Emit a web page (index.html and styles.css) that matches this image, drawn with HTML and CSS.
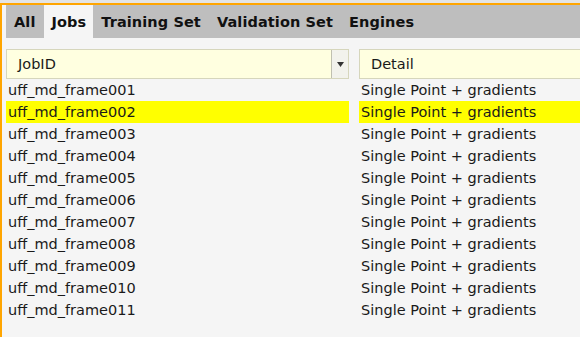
FILE: index.html
```html
<!DOCTYPE html>
<html lang="en">
<head>
	<meta charset="UTF-8">
	<title>Jobs</title>
	<link rel="stylesheet" href="styles.css">
</head>
<body>
	<div class="topline"></div>
	<div class="panel">
		<div class="tabs">
			<a href="javascript:;" class="tab">All</a>
			<a href="javascript:;" class="tab active">Jobs</a>
			<a href="javascript:;" class="tab">Training Set</a>
			<a href="javascript:;" class="tab">Validation Set</a>
			<a href="javascript:;" class="tab">Engines</a>
		</div>
		<div class="table">
			<div class="head combo">
				<span>JobID</span>
				<span class="arrow"><svg width="7" height="5" viewBox="0 0 7 5"><path d="M0 0h7L3.5 5z" fill="#333"/></svg></span>
			</div>
			<div class="head">Detail</div>

			<div class="cell">uff_md_frame001</div><div class="cell">Single Point + gradients</div>
			<div class="cell sel">uff_md_frame002</div><div class="cell sel">Single Point + gradients</div>
			<div class="cell">uff_md_frame003</div><div class="cell">Single Point + gradients</div>
			<div class="cell">uff_md_frame004</div><div class="cell">Single Point + gradients</div>
			<div class="cell">uff_md_frame005</div><div class="cell">Single Point + gradients</div>
			<div class="cell">uff_md_frame006</div><div class="cell">Single Point + gradients</div>
			<div class="cell">uff_md_frame007</div><div class="cell">Single Point + gradients</div>
			<div class="cell">uff_md_frame008</div><div class="cell">Single Point + gradients</div>
			<div class="cell">uff_md_frame009</div><div class="cell">Single Point + gradients</div>
			<div class="cell">uff_md_frame010</div><div class="cell">Single Point + gradients</div>
			<div class="cell">uff_md_frame011</div><div class="cell">Single Point + gradients</div>
		</div>
	</div>
</body>
</html>
```

FILE: styles.css
```css
html,body{
	margin:0;
	height: 100%;
	background: #f5f5f5;
	font-family: "DejaVu Sans", sans-serif;
	font-size: 14.5px;
	color: #1a1a1a;
	overflow: hidden;
}
.topline{
	height: 3px;
	background: #e4e4e4;
}
.panel{
	border-top: 2px solid #ffa500;
	border-left: 2px solid #ffa500;
	padding-left: 4px;
	height: 100%;
	box-sizing: border-box;
}
.tabs{
	display: flex;
	height: 33px;
	background: #bebebe;
}
.tab{
	display: flex;
	align-items: center;
	padding: 0 8px;
	font-weight: bold;
	letter-spacing: 0.1px;
	color: #111;
	text-decoration: none;
}
.tab.active{
	background: #f5f5f5;
	margin-left: 1px;
	padding: 0 7px;
}
.table{
	display: grid;
	grid-template-columns: 343px 1fr;
	grid-template-rows: 30px;
	grid-auto-rows: 22px;
	column-gap: 10px;
	margin-top: 11px;
}
.head{
	box-sizing: border-box;
	background: #ffffe0;
	border: 1px solid #d6d6bc;
	border-right: none;
	padding-left: 11px;
	display: flex;
	align-items: center;
	line-height: 1;
}
.head.combo{
	border-right: 1px solid #d6d6bc;
}
.head.combo span:first-child{
	flex: 1;
}
.arrow{
	width: 16px;
	height: 100%;
	border-left: 1px solid #c0c0b0;
	background: #f2f2ec;
	display: flex;
	align-items: center;
	justify-content: center;
}
.cell{
	padding-left: 2px;
	display: flex;
	align-items: center;
	white-space: nowrap;
}
.cell.sel{
	background: #ffff00;
}
```
